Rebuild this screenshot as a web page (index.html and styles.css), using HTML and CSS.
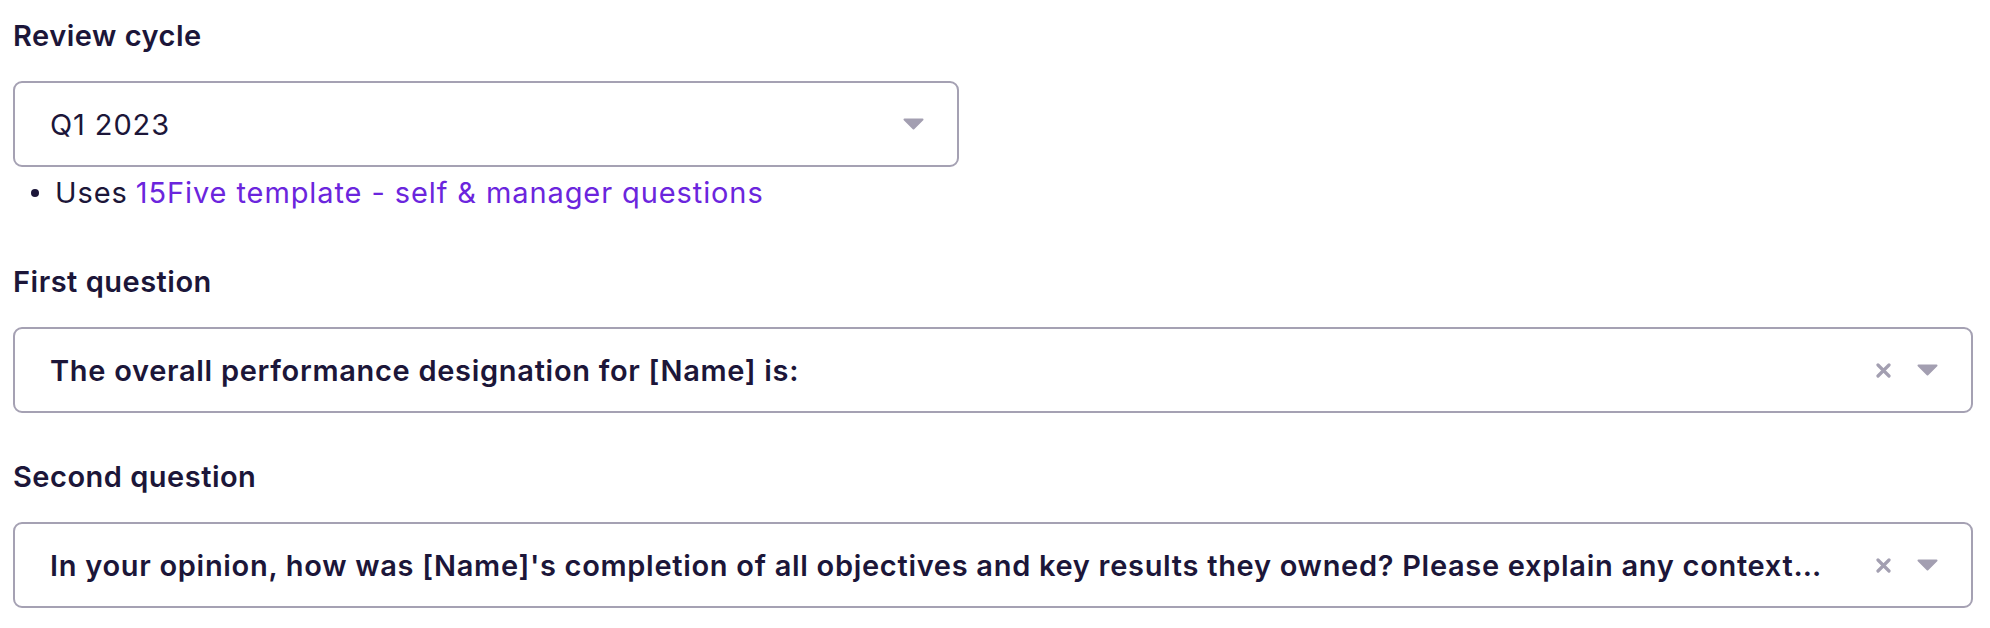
FILE: index.html
```html
<!DOCTYPE html>
<html lang="en">
<head>
<meta charset="utf-8">
<title>Review settings</title>
<link rel="stylesheet" href="styles.css">
</head>
<body>
<main class="form">
  <section class="field">
    <div class="label">Review cycle</div>
    <div class="select select--narrow">
      <div class="value">Q1 2023</div>
      <div class="indicators">
        <svg class="caret" width="21" height="12" viewBox="0 0 21 12"><path d="M1.5 1.5 L19.5 1.5 L10.5 10.5 Z" fill="#a39fb1" stroke="#a39fb1" stroke-width="2" stroke-linejoin="round"/></svg>
      </div>
    </div>
    <ul class="helper">
      <li>Uses <a class="link" href="#">15Five template - self &amp; manager questions</a></li>
    </ul>
  </section>

  <section class="field">
    <div class="label">First question</div>
    <div class="select">
      <div class="value value--bold">The overall performance designation for [Name] is:</div>
      <div class="indicators">
        <svg class="clear" width="15" height="15" viewBox="0 0 15 15"><path d="M2 2 L13 13 M13 2 L2 13" stroke="#a39fb1" stroke-width="3.2" stroke-linecap="round"/></svg>
        <svg class="caret" width="21" height="12" viewBox="0 0 21 12"><path d="M1.5 1.5 L19.5 1.5 L10.5 10.5 Z" fill="#a39fb1" stroke="#a39fb1" stroke-width="2" stroke-linejoin="round"/></svg>
      </div>
    </div>
  </section>

  <section class="field">
    <div class="label">Second question</div>
    <div class="select">
      <div class="value value--bold">In your opinion, how was [Name]'s completion of all objectives and key results they owned? Please explain any contextual factors that impacted their results.</div>
      <div class="indicators">
        <svg class="clear" width="15" height="15" viewBox="0 0 15 15"><path d="M2 2 L13 13 M13 2 L2 13" stroke="#a39fb1" stroke-width="3.2" stroke-linecap="round"/></svg>
        <svg class="caret" width="21" height="12" viewBox="0 0 21 12"><path d="M1.5 1.5 L19.5 1.5 L10.5 10.5 Z" fill="#a39fb1" stroke="#a39fb1" stroke-width="2" stroke-linejoin="round"/></svg>
      </div>
    </div>
  </section>
</main>
</body>
</html>
```
FILE: styles.css
```css
html, body {
  margin: 0;
  padding: 0;
  background: #ffffff;
}

body {
  font-family: "Inter", "Lato", "Noto Sans", sans-serif;
  color: #1c1639;
  font-size: 29px;
}

.form {
  display: flex;
  flex-direction: column;
  gap: 44px;
  padding: 16px 17px 0 13px;
}

.field {
  display: flex;
  flex-direction: column;
}

.label {
  font-weight: 600;
  line-height: 40px;
  letter-spacing: 0.5px;
  margin-bottom: 25px;
}

.select {
  display: flex;
  align-items: center;
  height: 86px;
  box-sizing: border-box;
  border: 2px solid #a5a1b3;
  border-radius: 9px;
  padding: 0 33px 0 35px;
}

.select--narrow {
  width: 946px;
}

.value {
  flex: 1;
  min-width: 0;
  white-space: nowrap;
  overflow: hidden;
  text-overflow: ellipsis;
  font-weight: 400;
  letter-spacing: 0.9px;
}

.value--bold {
  font-weight: 600;
  letter-spacing: 0.7px;
}

.indicators {
  display: flex;
  align-items: center;
  gap: 26px;
  margin-left: 44px;
}

.helper {
  list-style: none;
  margin: 6px 0 5px 0;
  padding: 0;
  line-height: 40px;
  letter-spacing: 0.9px;
}

.helper li {
  display: flex;
  align-items: center;
}

.helper li::before {
  content: "";
  width: 8px;
  height: 8px;
  border-radius: 50%;
  background: #1c1639;
  margin: 0 16px 0 18px;
  flex: none;
}

.link {
  color: #6b25dd;
  text-decoration: none;
  margin-left: 0.28em;
}
```
